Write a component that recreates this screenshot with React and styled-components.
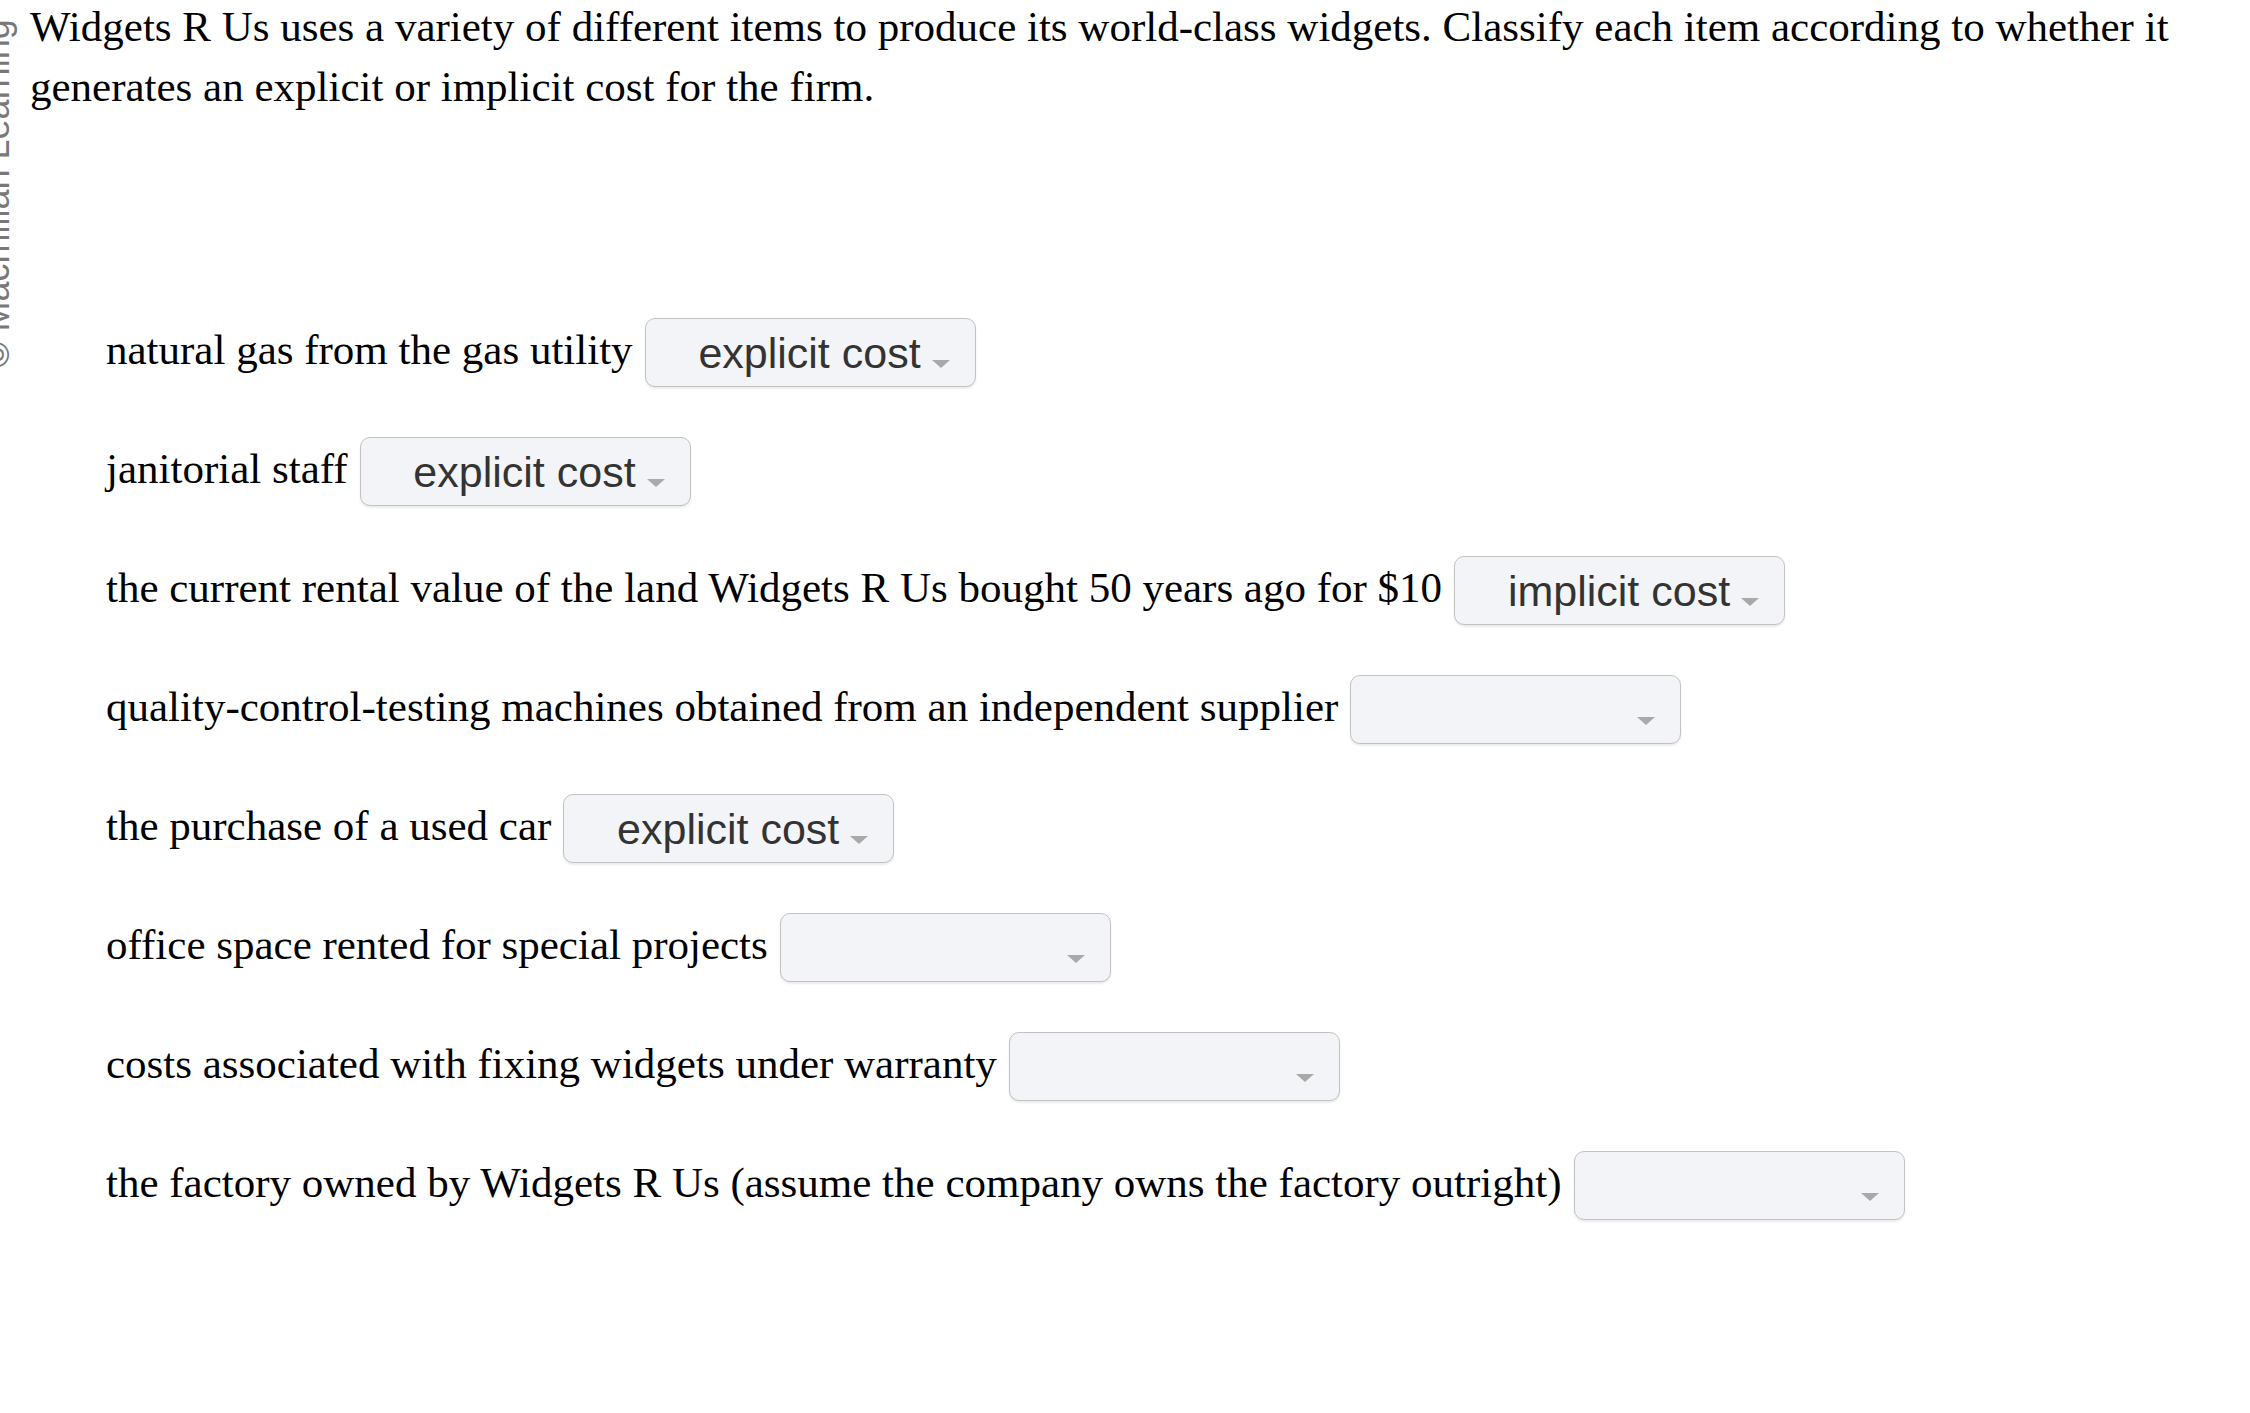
import React from "react";
import styled, { createGlobalStyle } from "styled-components";

const GlobalStyle = createGlobalStyle`
  html, body {
    margin: 0;
    padding: 0;
    background: #ffffff;
  }
  body {
    font-family: "Liberation Serif", "Times New Roman", serif;
    color: #000000;
  }
`;

const Page = styled.div`
  position: relative;
  min-height: 1413px;
  overflow: hidden;
  background: #ffffff;
`;

const Watermark = styled.span`
  position: absolute;
  left: -21px;
  top: 368px;
  transform-origin: 0 0;
  transform: rotate(-90deg);
  font-family: "Liberation Sans", Arial, sans-serif;
  font-size: 36px;
  line-height: 1;
  white-space: nowrap;
  color: #787878;
  pointer-events: none;
`;

const Prompt = styled.p`
  margin: -3px 0 0 0;
  padding: 0 20px 0 30px;
  font-size: 43px;
  line-height: 1.4;
`;

const ItemList = styled.div`
  display: flex;
  flex-direction: column;
  gap: 50px;
  padding: 0 0 0 106px;
  margin-top: 201px;
`;

const Row = styled.div`
  display: flex;
  align-items: flex-start;
  font-size: 43px;
  line-height: 1.4;
  white-space: nowrap;
`;

const Label = styled.span`
  padding-top: 2px;
  font-family: "Liberation Serif", "Times New Roman", serif;
`;

const Select = styled.div`
  display: inline-flex;
  align-items: baseline;
  justify-content: flex-end;
  box-sizing: border-box;
  width: 331px;
  height: 69px;
  margin-left: 12px;
  padding: 10px 25px 0 55px;
  border: 1px solid #c2c2c2;
  border-radius: 10px;
  background: #f3f4f7;
  box-shadow: 0 2px 2px rgba(0, 0, 0, 0.08);
  font-family: "Liberation Sans", Arial, sans-serif;
  font-size: 43px;
  line-height: 1.15;
  color: #333333;
  cursor: pointer;
`;

const Value = styled.span`
  flex: 1 1 auto;
  white-space: nowrap;
`;

const Caret = styled.span`
  display: inline-block;
  flex: none;
  width: 0;
  height: 0;
  margin-left: 11px;
  border-left: 9px solid transparent;
  border-right: 9px solid transparent;
  border-top: 8px solid #a9a9a9;
`;

const items = [
  { label: "natural gas from the gas utility", value: "explicit cost" },
  { label: "janitorial staff", value: "explicit cost" },
  {
    label: "the current rental value of the land Widgets R Us bought 50 years ago for $10",
    value: "implicit cost",
  },
  {
    label: "quality-control-testing machines obtained from an independent supplier",
    value: "",
  },
  { label: "the purchase of a used car", value: "explicit cost" },
  { label: "office space rented for special projects", value: "" },
  { label: "costs associated with fixing widgets under warranty", value: "" },
  {
    label: "the factory owned by Widgets R Us (assume the company owns the factory outright)",
    value: "",
  },
];

export default function App() {
  return (
    <>
      <GlobalStyle />
      <Page>
        <Watermark>© Macmillan Learning</Watermark>
        <Prompt>
          Widgets R Us uses a variety of different items to produce its world-class widgets.
          Classify each item according to whether it generates an explicit or implicit cost for
          the firm.
        </Prompt>
        <ItemList>
          {items.map((item) => (
            <Row key={item.label}>
              <Label>{item.label}</Label>
              <Select role="combobox" aria-label={item.label}>
                <Value>{item.value || "\u200b"}</Value>
                <Caret />
              </Select>
            </Row>
          ))}
        </ItemList>
      </Page>
    </>
  );
}
